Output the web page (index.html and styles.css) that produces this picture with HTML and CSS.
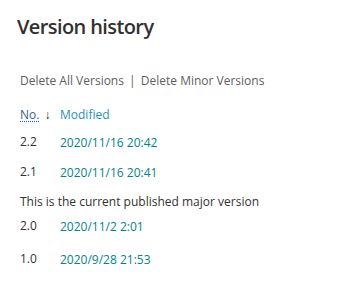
FILE: index.html
```html
<!DOCTYPE html>
<html lang="en">
<head>
  <meta charset="UTF-8">
  <title>Version history</title>
  <link rel="stylesheet" href="styles.css">
</head>
<body>
  <div class="panel">
    <h1>Version history</h1>

    <div class="actions">
      <a href="#">Delete All Versions</a>
      <span class="sep">|</span>
      <a href="#">Delete Minor Versions</a>
    </div>

    <div class="versions">
      <div class="head">
        <span class="col-no"><abbr title="Number">No.</abbr> <span class="arrow">&#8595;</span></span>
        <a class="col-mod" href="#">Modified</a>
      </div>
      <div class="row first">
        <span class="col-no">2.2</span>
        <a class="col-mod" href="#">2020/11/16 20:42</a>
      </div>
      <div class="row">
        <span class="col-no">2.1</span>
        <a class="col-mod" href="#">2020/11/16 20:41</a>
      </div>
      <div class="note">This is the current published major version</div>
      <div class="row current">
        <span class="col-no">2.0</span>
        <a class="col-mod" href="#">2020/11/2 2:01</a>
      </div>
      <div class="row last">
        <span class="col-no">1.0</span>
        <a class="col-mod" href="#">2020/9/28 21:53</a>
      </div>
    </div>
  </div>
</body>
</html>
```

FILE: styles.css
```css
body {
  margin: 0;
  font-family: "Open Sans", sans-serif;
  color: #323130;
  background: #fff;
}
.panel {
  padding: 13px 17px;
}
h1 {
  margin: 0;
  font-size: 20px;
  font-weight: 600;
  line-height: 28px;
  letter-spacing: -0.6px;
}
.actions {
  margin-top: 32px;
  padding-left: 3px;
  font-size: 12px;
  line-height: 16px;
  color: #605e5c;
}
.actions a {
  color: #605e5c;
  text-decoration: none;
}
.sep {
  margin: 0 2px;
}
.versions {
  margin-top: 18px;
  padding-left: 3px;
  font-size: 12px;
  line-height: 16px;
}
.head, .row {
  display: flex;
  align-items: flex-start;
}
.row .col-mod {
  padding-top: 1px;
}
.row {
  margin-top: 13px;
}
.row.first {
  margin-top: 11px;
}
.row.current {
  margin-top: 8px;
}
.row.last {
  margin-top: 16px;
}
.col-no {
  width: 40px;
}
.col-mod {
  color: #038387;
  text-decoration: none;
}
.head .col-mod {
  color: #2b8fb3;
}
.head .col-no {
  color: #3b5f86;
}
abbr {
  text-decoration: underline dotted #2b6cb0;
  text-underline-offset: 2px;
}
.arrow {
  color: #201f1e;
  margin-left: 2px;
}
.note {
  margin-top: 13px;
}
```
